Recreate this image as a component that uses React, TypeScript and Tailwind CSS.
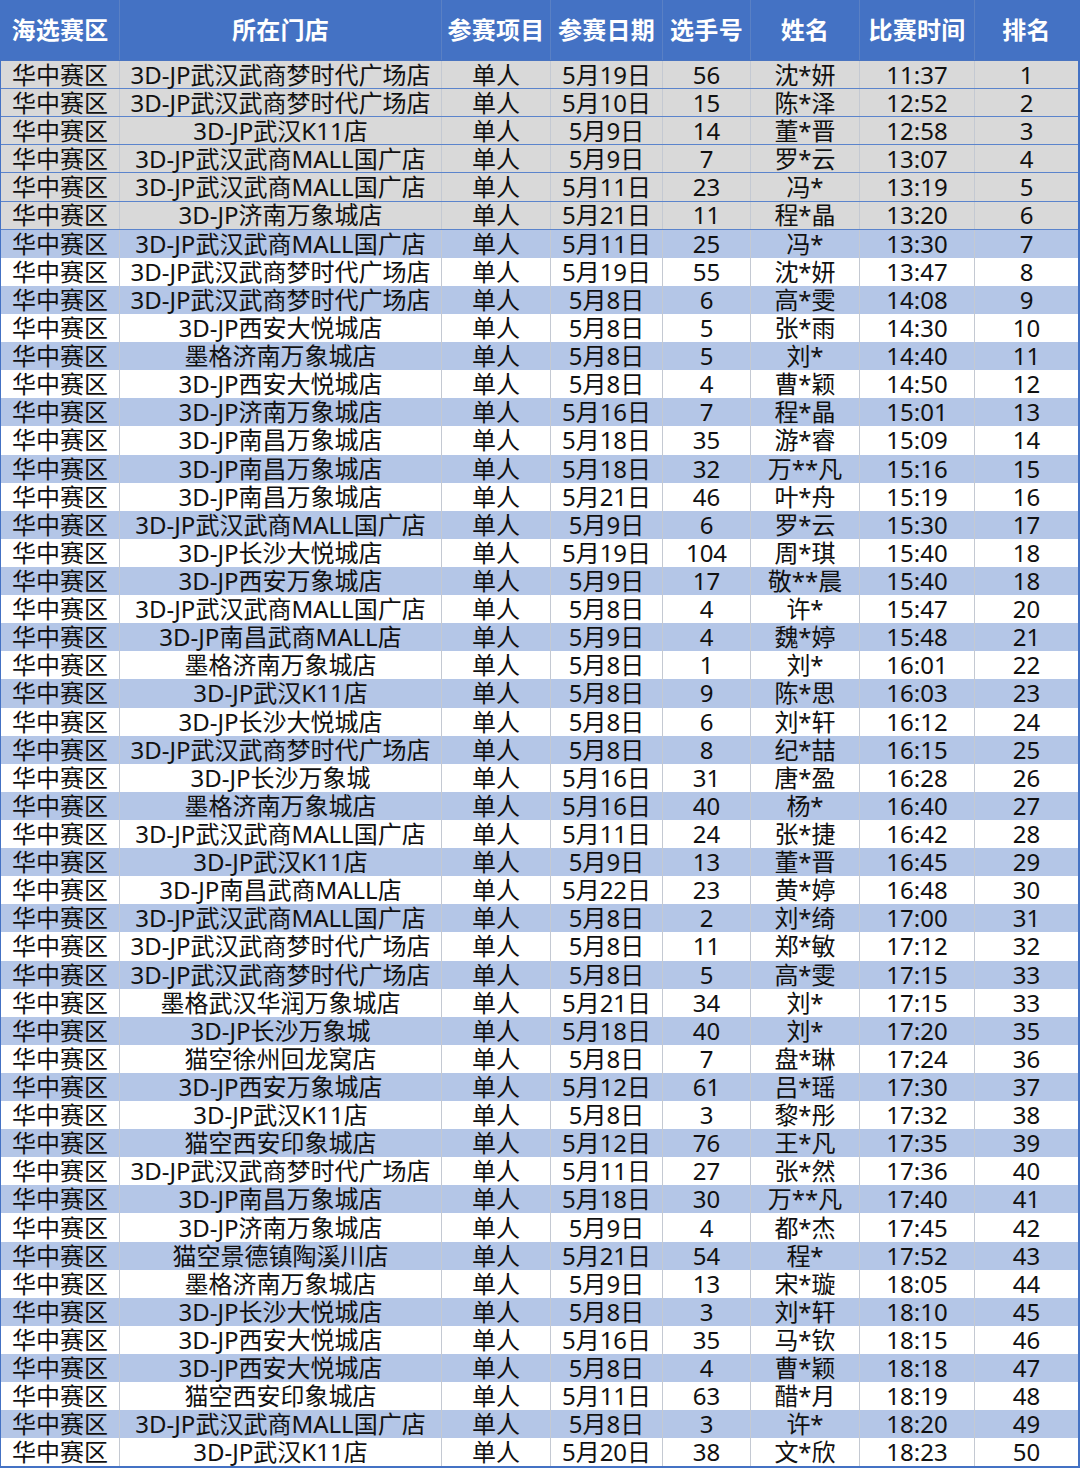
import React from "react";

const rows: string[][] = [
  ["3D-JP武汉武商梦时代广场店", "5月19日", "56", "沈*妍", "11:37", "1"],
  ["3D-JP武汉武商梦时代广场店", "5月10日", "15", "陈*泽", "12:52", "2"],
  ["3D-JP武汉K11店", "5月9日", "14", "董*晋", "12:58", "3"],
  ["3D-JP武汉武商MALL国广店", "5月9日", "7", "罗*云", "13:07", "4"],
  ["3D-JP武汉武商MALL国广店", "5月11日", "23", "冯*", "13:19", "5"],
  ["3D-JP济南万象城店", "5月21日", "11", "程*晶", "13:20", "6"],
  ["3D-JP武汉武商MALL国广店", "5月11日", "25", "冯*", "13:30", "7"],
  ["3D-JP武汉武商梦时代广场店", "5月19日", "55", "沈*妍", "13:47", "8"],
  ["3D-JP武汉武商梦时代广场店", "5月8日", "6", "高*雯", "14:08", "9"],
  ["3D-JP西安大悦城店", "5月8日", "5", "张*雨", "14:30", "10"],
  ["墨格济南万象城店", "5月8日", "5", "刘*", "14:40", "11"],
  ["3D-JP西安大悦城店", "5月8日", "4", "曹*颖", "14:50", "12"],
  ["3D-JP济南万象城店", "5月16日", "7", "程*晶", "15:01", "13"],
  ["3D-JP南昌万象城店", "5月18日", "35", "游*睿", "15:09", "14"],
  ["3D-JP南昌万象城店", "5月18日", "32", "万**凡", "15:16", "15"],
  ["3D-JP南昌万象城店", "5月21日", "46", "叶*舟", "15:19", "16"],
  ["3D-JP武汉武商MALL国广店", "5月9日", "6", "罗*云", "15:30", "17"],
  ["3D-JP长沙大悦城店", "5月19日", "104", "周*琪", "15:40", "18"],
  ["3D-JP西安万象城店", "5月9日", "17", "敬**晨", "15:40", "18"],
  ["3D-JP武汉武商MALL国广店", "5月8日", "4", "许*", "15:47", "20"],
  ["3D-JP南昌武商MALL店", "5月9日", "4", "魏*婷", "15:48", "21"],
  ["墨格济南万象城店", "5月8日", "1", "刘*", "16:01", "22"],
  ["3D-JP武汉K11店", "5月8日", "9", "陈*思", "16:03", "23"],
  ["3D-JP长沙大悦城店", "5月8日", "6", "刘*轩", "16:12", "24"],
  ["3D-JP武汉武商梦时代广场店", "5月8日", "8", "纪*喆", "16:15", "25"],
  ["3D-JP长沙万象城", "5月16日", "31", "唐*盈", "16:28", "26"],
  ["墨格济南万象城店", "5月16日", "40", "杨*", "16:40", "27"],
  ["3D-JP武汉武商MALL国广店", "5月11日", "24", "张*捷", "16:42", "28"],
  ["3D-JP武汉K11店", "5月9日", "13", "董*晋", "16:45", "29"],
  ["3D-JP南昌武商MALL店", "5月22日", "23", "黄*婷", "16:48", "30"],
  ["3D-JP武汉武商MALL国广店", "5月8日", "2", "刘*绮", "17:00", "31"],
  ["3D-JP武汉武商梦时代广场店", "5月8日", "11", "郑*敏", "17:12", "32"],
  ["3D-JP武汉武商梦时代广场店", "5月8日", "5", "高*雯", "17:15", "33"],
  ["墨格武汉华润万象城店", "5月21日", "34", "刘*", "17:15", "33"],
  ["3D-JP长沙万象城", "5月18日", "40", "刘*", "17:20", "35"],
  ["猫空徐州回龙窝店", "5月8日", "7", "盘*琳", "17:24", "36"],
  ["3D-JP西安万象城店", "5月12日", "61", "吕*瑶", "17:30", "37"],
  ["3D-JP武汉K11店", "5月8日", "3", "黎*彤", "17:32", "38"],
  ["猫空西安印象城店", "5月12日", "76", "王*凡", "17:35", "39"],
  ["3D-JP武汉武商梦时代广场店", "5月11日", "27", "张*然", "17:36", "40"],
  ["3D-JP南昌万象城店", "5月18日", "30", "万**凡", "17:40", "41"],
  ["3D-JP济南万象城店", "5月9日", "4", "都*杰", "17:45", "42"],
  ["猫空景德镇陶溪川店", "5月21日", "54", "程*", "17:52", "43"],
  ["墨格济南万象城店", "5月9日", "13", "宋*璇", "18:05", "44"],
  ["3D-JP长沙大悦城店", "5月8日", "3", "刘*轩", "18:10", "45"],
  ["3D-JP西安大悦城店", "5月16日", "35", "马*钦", "18:15", "46"],
  ["3D-JP西安大悦城店", "5月8日", "4", "曹*颖", "18:18", "47"],
  ["猫空西安印象城店", "5月11日", "63", "醋*月", "18:19", "48"],
  ["3D-JP武汉武商MALL国广店", "5月8日", "3", "许*", "18:20", "49"],
  ["3D-JP武汉K11店", "5月20日", "38", "文*欣", "18:23", "50"],
];

const headers = ["海选赛区", "所在门店", "参赛项目", "参赛日期", "选手号", "姓名", "比赛时间", "排名"];

const gridCols = "grid grid-cols-[119px_322px_109px_112px_88px_109px_115px_103px]";

export default function App() {
  return (
    <div
      className="w-[1080px] h-[1470px] bg-white overflow-hidden"
      style={{ fontFamily: '"Noto Sans", "Noto Sans CJK SC", sans-serif' }}
    >
      <div className="w-[1080px] border-l border-r-2 border-b-2 border-[#4472c4]">
        <div className={`${gridCols} h-[61px] bg-[#4472c4] border-b border-[#4a74c0]`}>
          {headers.map((h, i) => (
            <div
              key={i}
              className={`flex items-center justify-center text-white font-bold text-[24px] tracking-[0.3px] ${
                i < 7 ? "border-r border-[#5a80c4]" : ""
              }`}
            >
              {h}
            </div>
          ))}
        </div>
        {rows.map((r, idx) => {
          const n = idx + 1;
          const bg = n <= 6 ? "bg-[#d9d9d9]" : n % 2 === 1 ? "bg-[#b4c6e7]" : "bg-white";
          const line = n <= 6 ? "border-b border-[#5b84cc]" : "";
          const cells = ["华中赛区", ...r.slice(0, 1), "单人", ...r.slice(1)];
          return (
            <div key={idx} className={`${gridCols} h-[28.12px] ${bg} ${line}`}>
              {cells.map((c, i) => (
                <div
                  key={i}
                  className={`flex items-center justify-center text-[#111] text-[24px] leading-none whitespace-nowrap ${
                    i < 7 ? "border-r border-[#c4c9d2]" : ""
                  }`}
                >
                  {c}
                </div>
              ))}
            </div>
          );
        })}
      </div>
    </div>
  );
}
